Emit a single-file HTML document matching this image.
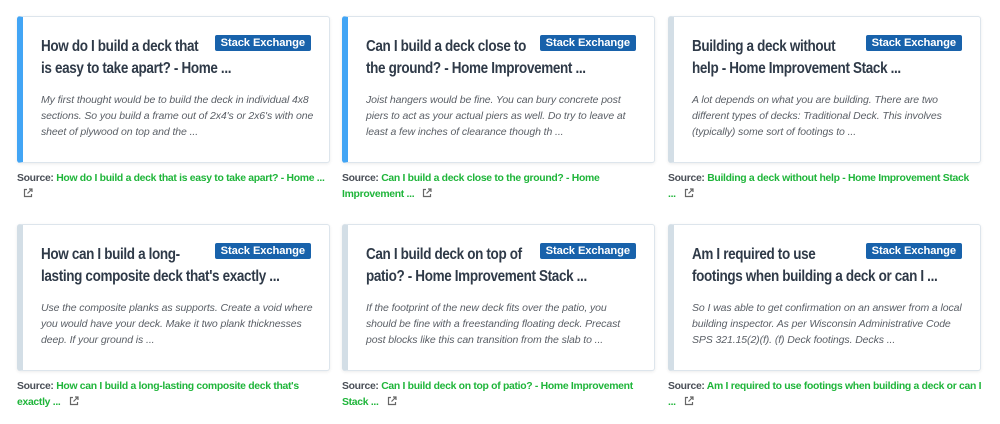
<!DOCTYPE html>
<html><head><style>
*{margin:0;padding:0;box-sizing:border-box}
body{width:1000px;height:424px;background:#fff;font-family:"Liberation Sans",sans-serif;position:relative;overflow:hidden}
.item{position:absolute;width:313px}
.card{position:relative;height:147px;border:1px solid #dde5ec;border-left:6px solid #d3dee6;border-radius:3px;background:#fff;box-shadow:0 1px 3px rgba(0,0,0,.08);padding:19px 0 0 18px;white-space:nowrap}
.card.blue{border-left-color:#42a5f5}
.badge{position:absolute;right:18px;top:18px;background:#1862ab;color:#fff;font-size:11.2px;letter-spacing:-0.1px;font-weight:bold;line-height:16px;padding:0 6px;border-radius:2px}
.title{font-size:15.5px;letter-spacing:-0.4px;font-weight:bold;color:#2f3a48;line-height:22px;height:44px;transform:scaleX(0.87);transform-origin:0 0}
.snip{margin-top:12px;font-size:10.5px;letter-spacing:-0.1px;font-style:italic;color:#5a5f66;line-height:16px}
.src{margin-top:8px;font-size:10.4px;letter-spacing:-0.3px;font-weight:bold;line-height:15.5px;color:#4a4f57;white-space:nowrap}
.src a{color:#1fb53a;text-decoration:none}
.ext{display:inline-block;vertical-align:-1px;margin-left:8px}
</style></head><body>

<div class="item" style="left:17px;top:16px">
<div class="card blue"><span class="badge">Stack Exchange</span><div class="title">How do I build a deck that<br>is easy to take apart? - Home ...</div>
<div class="snip">My first thought would be to build the deck in individual 4x8<br>sections. So you build a frame out of 2x4's or 2x6's with one<br>sheet of plywood on top and the ...</div></div>
<div class="src">Source: <a>How do I build a deck that is easy to take apart? - Home ...</a><br><svg class="ext" style="margin-left:6px" width="10" height="10" viewBox="0 0 10 10" fill="none" stroke="#666" stroke-width="1.2"><path d="M4 1.5H1.5v7h7V6M6 1h3v3M9 1L4.5 5.5"/></svg></div>
</div>

<div class="item" style="left:342px;top:16px">
<div class="card blue"><span class="badge">Stack Exchange</span><div class="title">Can I build a deck close to<br>the ground? - Home Improvement ...</div>
<div class="snip">Joist hangers would be fine. You can bury concrete post<br>piers to act as your actual piers as well. Do try to leave at<br>least a few inches of clearance though th ...</div></div>
<div class="src">Source: <a>Can I build a deck close to the ground? - Home<br>Improvement ...</a><svg class="ext" width="10" height="10" viewBox="0 0 10 10" fill="none" stroke="#666" stroke-width="1.2"><path d="M4 1.5H1.5v7h7V6M6 1h3v3M9 1L4.5 5.5"/></svg></div>
</div>

<div class="item" style="left:668px;top:16px">
<div class="card"><span class="badge">Stack Exchange</span><div class="title">Building a deck without<br>help - Home Improvement Stack ...</div>
<div class="snip">A lot depends on what you are building. There are two<br>different types of decks: Traditional Deck. This involves<br>(typically) some sort of footings to ...</div></div>
<div class="src">Source: <a>Building a deck without help - Home Improvement Stack<br>...</a><svg class="ext" width="10" height="10" viewBox="0 0 10 10" fill="none" stroke="#666" stroke-width="1.2"><path d="M4 1.5H1.5v7h7V6M6 1h3v3M9 1L4.5 5.5"/></svg></div>
</div>

<div class="item" style="left:17px;top:224px">
<div class="card"><span class="badge">Stack Exchange</span><div class="title">How can I build a long-<br>lasting composite deck that's exactly ...</div>
<div class="snip">Use the composite planks as supports. Create a void where<br>you would have your deck. Make it two plank thicknesses<br>deep. If your ground is ...</div></div>
<div class="src">Source: <a>How can I build a long-lasting composite deck that's<br>exactly ...</a><svg class="ext" width="10" height="10" viewBox="0 0 10 10" fill="none" stroke="#666" stroke-width="1.2"><path d="M4 1.5H1.5v7h7V6M6 1h3v3M9 1L4.5 5.5"/></svg></div>
</div>

<div class="item" style="left:342px;top:224px">
<div class="card"><span class="badge">Stack Exchange</span><div class="title">Can I build deck on top of<br>patio? - Home Improvement Stack ...</div>
<div class="snip">If the footprint of the new deck fits over the patio, you<br>should be fine with a freestanding floating deck. Precast<br>post blocks like this can transition from the slab to ...</div></div>
<div class="src">Source: <a>Can I build deck on top of patio? - Home Improvement<br>Stack ...</a><svg class="ext" width="10" height="10" viewBox="0 0 10 10" fill="none" stroke="#666" stroke-width="1.2"><path d="M4 1.5H1.5v7h7V6M6 1h3v3M9 1L4.5 5.5"/></svg></div>
</div>

<div class="item" style="left:668px;top:224px">
<div class="card"><span class="badge">Stack Exchange</span><div class="title">Am I required to use<br>footings when building a deck or can I ...</div>
<div class="snip">So I was able to get confirmation on an answer from a local<br>building inspector. As per Wisconsin Administrative Code<br>SPS 321.15(2)(f). (f) Deck footings. Decks ...</div></div>
<div class="src">Source: <a>Am I required to use footings when building a deck or can I<br>...</a><svg class="ext" width="10" height="10" viewBox="0 0 10 10" fill="none" stroke="#666" stroke-width="1.2"><path d="M4 1.5H1.5v7h7V6M6 1h3v3M9 1L4.5 5.5"/></svg></div>
</div>

</body></html>
